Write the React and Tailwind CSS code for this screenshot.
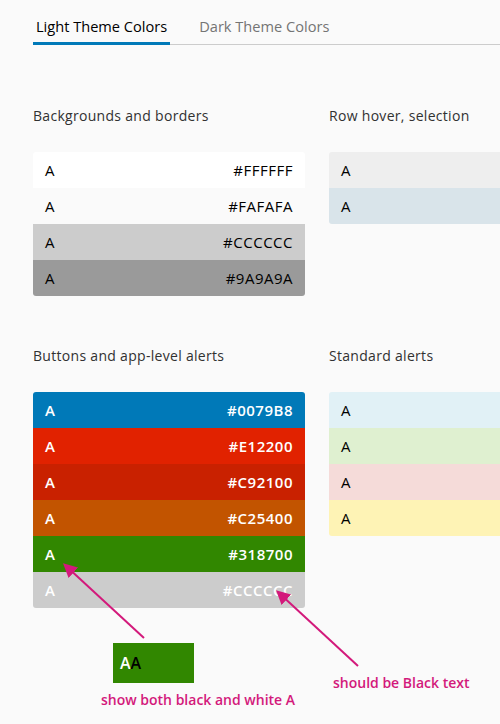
import React from 'react';

const neutral = [
  { bg: 'bg-[#ffffff]', hex: '#FFFFFF' },
  { bg: 'bg-[#fafafa]', hex: '#FAFAFA' },
  { bg: 'bg-[#cccccc]', hex: '#CCCCCC' },
  { bg: 'bg-[#9a9a9a]', hex: '#9A9A9A' },
];

const hover = ['bg-[#eeeeee]', 'bg-[#d9e4ea]'];

const buttons = [
  { bg: 'bg-[#0079b8]', hex: '#0079B8' },
  { bg: 'bg-[#e12200]', hex: '#E12200' },
  { bg: 'bg-[#c92100]', hex: '#C92100' },
  { bg: 'bg-[#c25400]', hex: '#C25400' },
  { bg: 'bg-[#318700]', hex: '#318700' },
  { bg: 'bg-[#cccccc]', hex: '#CCCCCC' },
];

const alerts = ['bg-[#e1f1f6]', 'bg-[#dff0d0]', 'bg-[#f5dbd9]', 'bg-[#fef3b5]'];

function Swatch({ bg, hex, light = false }) {
  return (
    <div
      className={`flex h-9 items-center justify-between px-3 text-[15px] tracking-[0.5px] ${bg} ${
        light ? 'font-semibold text-white' : 'text-black'
      }`}
    >
      <span>A</span>
      {hex && <span>{hex}</span>}
    </div>
  );
}

function Section({ title, children }) {
  return (
    <div>
      <h3 className="text-[14px] leading-5 tracking-[0.3px] text-[#313131]">{title}</h3>
      <div className="mt-[26px] overflow-hidden rounded-[3px]">{children}</div>
    </div>
  );
}

function Arrow({ x1, y1, x2, y2 }) {
  return (
    <line x1={x1} y1={y1} x2={x2} y2={y2} stroke="#d3197b" strokeWidth="2" markerEnd="url(#head)" />
  );
}

export default function App() {
  return (
    <div
      className="relative h-[724px] w-[500px] overflow-hidden bg-[#fafafa] pl-[33px] text-[14px]"
      style={{ fontFamily: '"Open Sans", "Liberation Sans", sans-serif' }}
    >
      {/* Tabs */}
      <div className="mt-4 flex w-[600px] gap-[26px] border-b border-[#cccccc]">
        <div className="-mb-px border-b-[3px] border-[#0079b8] px-[3px] pb-[6px] text-[14.6px] leading-5 text-[#000000]">
          Light Theme Colors
        </div>
        <div className="px-[3px] pb-[6px] text-[14.6px] leading-5 text-[#747474]">Dark Theme Colors</div>
      </div>

      {/* Color sections */}
      <div className="mt-[61px] grid w-[568px] grid-cols-[272px_272px] gap-x-6 gap-y-[50px]">
        <Section title="Backgrounds and borders">
          {neutral.map((s) => (
            <Swatch key={s.hex} bg={s.bg} hex={s.hex} />
          ))}
        </Section>
        <Section title="Row hover, selection">
          {hover.map((bg) => (
            <Swatch key={bg} bg={bg} />
          ))}
        </Section>
        <Section title="Buttons and app-level alerts">
          {buttons.map((s) => (
            <Swatch key={s.hex} bg={s.bg} hex={s.hex} light />
          ))}
        </Section>
        <Section title="Standard alerts">
          {alerts.map((bg) => (
            <Swatch key={bg} bg={bg} />
          ))}
        </Section>
      </div>

      {/* Annotations */}
      <svg className="pointer-events-none absolute left-0 top-0" width="500" height="724">
        <defs>
          <marker id="head" markerWidth="7" markerHeight="7" refX="5" refY="3.5" orient="auto" markerUnits="strokeWidth">
            <path d="M0,0 L7,3.5 L0,7 z" fill="#d3197b" />
          </marker>
        </defs>
        <Arrow x1={144} y1={638} x2={66} y2={566} />
        <Arrow x1={358} y1={666} x2={279} y2={593} />
      </svg>
      <div className="absolute left-[113px] top-[643px] flex h-10 w-[81px] items-center bg-[#318700] pl-[7px] text-[16px] font-semibold">
        <span className="text-white">A</span>
        <span className="text-black">A</span>
      </div>
      <div className="absolute left-[101px] top-[690px] font-semibold leading-5 text-[#d3197b]">show both black and white A</div>
      <div className="absolute left-[333px] top-[673px] font-semibold leading-5 text-[#d3197b]">should be Black text</div>
    </div>
  );
}
